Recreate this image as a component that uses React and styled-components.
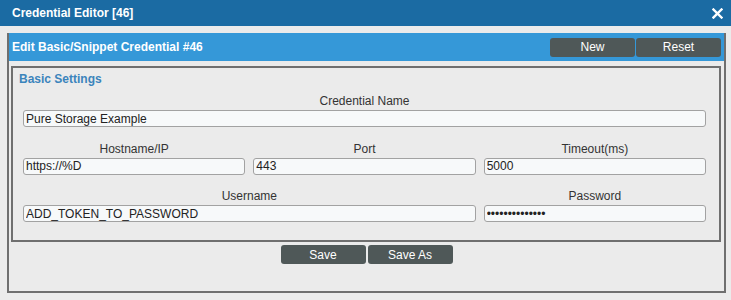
import React from 'react';
import styled, { createGlobalStyle } from 'styled-components';

const GlobalStyle = createGlobalStyle`
  html, body { margin: 0; padding: 0; background: #ebebeb; }
  body { font-family: "Liberation Sans", Arial, sans-serif; }
  * { box-sizing: border-box; }
`;

const Window = styled.div`
  width: 731px; height: 300px; overflow: hidden; background: #ebebeb;
  display: flex; flex-direction: column;
`;

const TitleBar = styled.div`
  height: 26px; flex: none; background: #1b6ba3; color: #fff;
  display: flex; align-items: center; justify-content: space-between;
  padding: 0 8px 0 12px;
  font-size: 12px; font-weight: bold;
`;

const CloseBtn = styled.button`
  width: 12px; height: 12px; padding: 0; border: 0; background: none; cursor: pointer;
  display: flex; align-items: center; justify-content: center;
  svg { display: block; }
`;

const Body = styled.div`
  padding: 7px 5px 0 7px;
`;

const Panel = styled.div`
  height: 260px;
  border: 2px solid #6f6f6f; border-top: 0;
  display: flex; flex-direction: column;
`;

const PanelHeader = styled.div`
  height: 28px; flex: none; background: #3598d8; color: #fff;
  display: flex; align-items: center;
  padding: 0 3px 0 3px;
  font-size: 12px; font-weight: bold;
`;

const HeaderTitle = styled.div`
  margin-right: auto;
`;

const BtnGroup = styled.div`
  display: flex; gap: ${p => p.$gap ?? 2}px;
  justify-content: ${p => p.$center ? 'center' : 'flex-end'};
  margin-top: ${p => p.$top || 0}px;
`;

const Btn = styled.button`
  width: 85px; height: 19px; padding: 0;
  background: #4f5858; color: #fff; border: 0; border-radius: 3px;
  font-family: "Liberation Sans", Arial, sans-serif; font-size: 12px;
  cursor: pointer;
`;

const Fieldset = styled.div`
  margin: 5px 3px 0 2px;
  border: 2px solid #6f6f6f;
  padding: 4px 13px 18px 10px;
`;

const Legend = styled.div`
  margin-left: -4px; line-height: 14px;
  color: #3b84bc; font-size: 12px; font-weight: bold;
`;

const Grid = styled.div`
  margin-top: 7px;
  display: grid; grid-template-columns: 1fr 1fr 1fr;
  column-gap: 8px; row-gap: 13.5px;
`;

const Field = styled.div`
  grid-column: span ${p => p.$span || 1};
  display: flex; flex-direction: column;
`;

const Label = styled.label`
  line-height: 16px; text-align: center;
  font-size: 12px; color: #333;
  margin-bottom: 1px;
`;

const Input = styled.input`
  height: 17px; width: 100%;
  border: 1px solid #a2a2a2; border-radius: 3px;
  background: #f7f9fa; padding: 0 2px;
  font-family: "Liberation Sans", Arial, sans-serif; font-size: 12px; color: #222;
  outline: none;
`;

export default function App() {
  return (
    <>
      <GlobalStyle />
      <Window>
        <TitleBar>
          <span>Credential Editor [46]</span>
          <CloseBtn aria-label="close">
            <svg width="11" height="11" viewBox="0 0 11 11">
              <path d="M1.5 1.5 L9.5 9.5 M9.5 1.5 L1.5 9.5" stroke="#fff" strokeWidth="2.4" strokeLinecap="square" />
            </svg>
          </CloseBtn>
        </TitleBar>
        <Body>
          <Panel>
            <PanelHeader>
              <HeaderTitle>Edit Basic/Snippet Credential #46</HeaderTitle>
              <BtnGroup $gap={1}>
                <Btn>New</Btn>
                <Btn>Reset</Btn>
              </BtnGroup>
            </PanelHeader>
            <Fieldset>
              <Legend>Basic Settings</Legend>
              <Grid>
                <Field $span={3}>
                  <Label>Credential Name</Label>
                  <Input defaultValue="Pure Storage Example" />
                </Field>
                <Field>
                  <Label>Hostname/IP</Label>
                  <Input defaultValue="https://%D" />
                </Field>
                <Field>
                  <Label>Port</Label>
                  <Input defaultValue="443" />
                </Field>
                <Field>
                  <Label>Timeout(ms)</Label>
                  <Input defaultValue="5000" />
                </Field>
                <Field $span={2}>
                  <Label>Username</Label>
                  <Input defaultValue="ADD_TOKEN_TO_PASSWORD" />
                </Field>
                <Field>
                  <Label>Password</Label>
                  <Input type="password" defaultValue="abcdefghijklmn" />
                </Field>
              </Grid>
            </Fieldset>
            <BtnGroup $center $top={3}>
              <Btn>Save</Btn>
              <Btn>Save As</Btn>
            </BtnGroup>
          </Panel>
        </Body>
      </Window>
    </>
  );
}
